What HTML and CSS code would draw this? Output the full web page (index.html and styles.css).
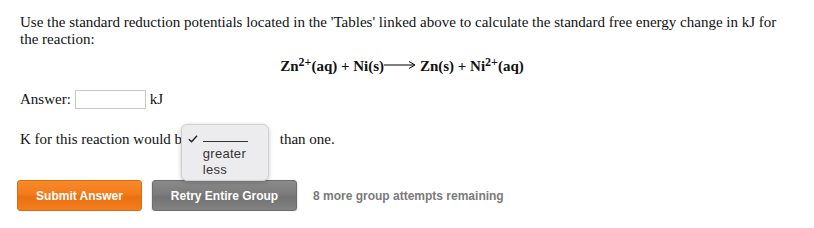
FILE: index.html
```html
<!DOCTYPE html>
<html>
<head>
<meta charset="utf-8">
<link rel="stylesheet" href="styles.css">
</head>
<body>
<main class="question">
  <p class="prompt">Use the standard reduction potentials located in the 'Tables' linked above to calculate the standard free energy change in kJ for the reaction:</p>
  <p class="equation">Zn<sup>2+</sup>(aq) + Ni(s)<svg class="arrow" width="32" height="10" viewBox="0 0 32 10"><line x1="0" y1="5" x2="30" y2="5" stroke="#000" stroke-width="1"/><path d="M25 1.5 L31 5 L25 8.5" fill="none" stroke="#000" stroke-width="1"/></svg> Zn(s) + Ni<sup>2+</sup>(aq)</p>
  <div class="answer-row">
    <span>Answer:</span>
    <input class="answer-input" type="text">
    <span>kJ</span>
  </div>
  <div class="k-row">
    <span>K for this reaction would be</span>
    <span class="select-wrap">
      <span class="popup">
        <span class="opt selected"><svg class="check" width="10" height="8" viewBox="0 0 10 8"><path d="M0.8 4.2 L3.6 6.8 L9 0.8" fill="none" stroke="#222" stroke-width="1.4"/></svg><span class="blank"></span></span>
        <span class="opt">greater</span>
        <span class="opt">less</span>
      </span>
    </span>
    <span>than one.</span>
  </div>
  <div class="actions">
    <button class="btn btn-submit">Submit Answer</button>
    <button class="btn btn-retry">Retry Entire Group</button>
    <span class="remaining">8 more group attempts remaining</span>
  </div>
</main>
</body>
</html>
```
FILE: styles.css
```css
* { box-sizing: border-box; }
body {
  margin: 0;
  background: #fff;
  font-family: "Liberation Serif", "Times New Roman", serif;
  font-size: 15px;
  color: #111;
}
.question {
  padding: 14px 17px 0 17px;
}
.prompt {
  margin: 0;
  padding-left: 3px;
  line-height: 17px;
  width: 780px;
}
.equation {
  margin: 8px 0 0 0;
  text-align: center;
  font-weight: bold;
  line-height: 20px;
  padding-right: 10px;
}
.equation sup {
  font-size: 12px;
  line-height: 0;
  vertical-align: 5px;
}
.arrow {
  vertical-align: 1px;
}
.answer-row {
  margin-top: 13px;
  padding-left: 3px;
  display: flex;
  align-items: center;
  height: 20px;
}
.answer-input {
  width: 71px;
  height: 19px;
  margin: 0 4px 0 4px;
  border: 1px solid #c8c8c8;
  border-radius: 0;
  padding: 0;
}
.k-row {
  margin-top: 20px;
  padding-left: 3px;
  display: flex;
  align-items: center;
  height: 20px;
}
.select-wrap {
  position: relative;
  display: inline-block;
  width: 103px;
  height: 20px;
  margin-left: -12px;
}
.popup {
  position: absolute;
  left: 4px;
  top: -5px;
  width: 88px;
  height: 57px;
  display: flex;
  flex-direction: column;
  background: #ececee;
  border: 1px solid #cfd0d2;
  border-radius: 6px;
  box-shadow: 0 1px 4px rgba(0,0,0,0.22);
  font-family: "Liberation Sans", Arial, sans-serif;
  font-size: 13px;
  letter-spacing: 0.3px;
  color: #333;
  padding: 3px 0 0 0;
}
.opt {
  display: block;
  height: 16px;
  line-height: 16px;
  padding-left: 21px;
}
.opt.selected {
  position: relative;
  height: 18px;
}
.check {
  position: absolute;
  left: 6px;
  top: 7px;
}
.blank {
  display: block;
  width: 45px;
  border-bottom: 1px solid #333;
  height: 14px;
}
.actions {
  margin-top: 31px;
  display: flex;
  align-items: center;
  gap: 10px;
}
.btn {
  height: 31px;
  border-radius: 3px;
  font-family: "Liberation Sans", Arial, sans-serif;
  font-weight: bold;
  font-size: 12px;
  color: #fff;
  padding: 0;
  cursor: pointer;
}
.btn-submit {
  width: 125px;
  background: linear-gradient(#f78a2a, #f47b1b 45%, #e7700f 55%, #f57d1d);
  border: 1px solid #e06a10;
}
.btn-retry {
  width: 145px;
  background: linear-gradient(#8a8a8a, #7b7b7b 45%, #727272 55%, #838383);
  border: 1px solid #6d6d6d;
  box-shadow: 0 1px 2px rgba(0,0,0,0.3);
}
.remaining {
  margin-left: 6px;
  font-family: "Liberation Sans", Arial, sans-serif;
  font-weight: bold;
  font-size: 12px;
  color: #7a7a7a;
}
```
